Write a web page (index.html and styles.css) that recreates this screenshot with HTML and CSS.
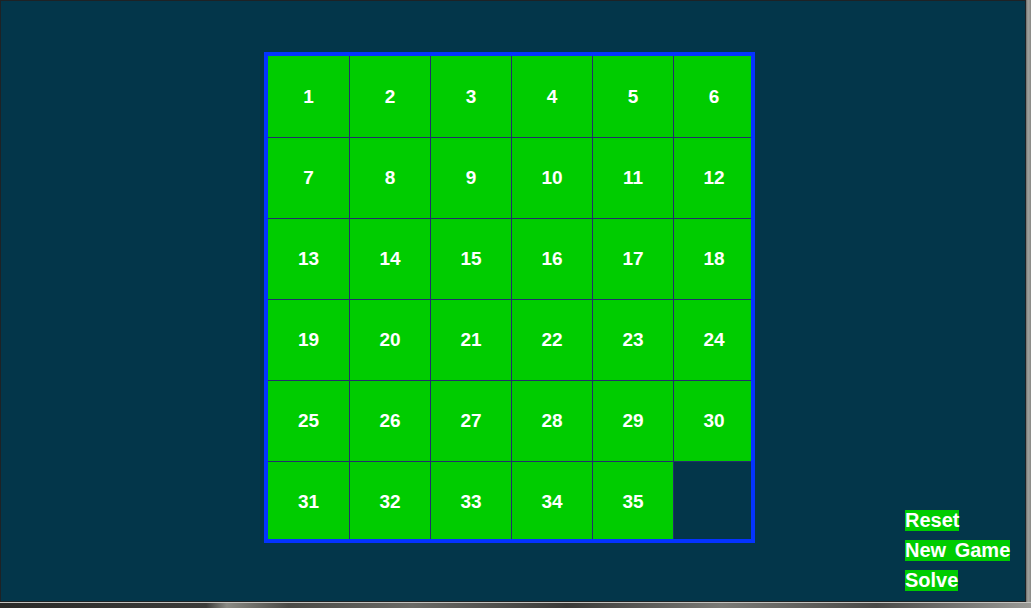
FILE: index.html
```html
<!DOCTYPE html>
<html>
<head>
<meta charset="utf-8">
<link rel="stylesheet" href="styles.css">
</head>
<body>
<div class="screen">
  <div class="top">
    <div class="window">
      <div class="board">
        <div class="tile">1</div><div class="tile">2</div><div class="tile">3</div><div class="tile">4</div><div class="tile">5</div><div class="tile">6</div>
        <div class="tile">7</div><div class="tile">8</div><div class="tile">9</div><div class="tile">10</div><div class="tile">11</div><div class="tile">12</div>
        <div class="tile">13</div><div class="tile">14</div><div class="tile">15</div><div class="tile">16</div><div class="tile">17</div><div class="tile">18</div>
        <div class="tile">19</div><div class="tile">20</div><div class="tile">21</div><div class="tile">22</div><div class="tile">23</div><div class="tile">24</div>
        <div class="tile">25</div><div class="tile">26</div><div class="tile">27</div><div class="tile">28</div><div class="tile">29</div><div class="tile">30</div>
        <div class="tile">31</div><div class="tile">32</div><div class="tile">33</div><div class="tile">34</div><div class="tile">35</div><div class="empty"></div>
      </div>
      <div class="controls">
        <span class="btn">Reset</span>
        <span class="btn">New Game</span>
        <span class="btn">Solve</span>
      </div>
    </div>
    <div class="side"></div>
  </div>
  <div class="bottom"></div>
</div>
</body>
</html>
```

FILE: styles.css
```css
html, body {
  margin: 0;
  padding: 0;
  background: #5a5a56;
}
.screen {
  width: 1031px;
  height: 608px;
  display: flex;
  flex-direction: column;
  overflow: hidden;
}
.top {
  display: flex;
  height: 602px;
}
.window {
  box-sizing: border-box;
  width: 1026px;
  height: 602px;
  border: 1px solid #1e2225;
  background: #03364a;
  display: flex;
  align-items: flex-start;
}
.side {
  flex: 1;
  background: linear-gradient(to right, #6e6e6a, #a2a29e 40%, #8a8a86);
}
.bottom {
  height: 6px;
  border-top: 1px solid #c4c4c0;
  background: linear-gradient(to right, #2a2a28, #3c3c3a 20%, #8a8a84 22%, #4a4a46 28%, #6a6a66 40%, #3a3a38 55%, #7a7a76 70%, #4a4a48 85%, #9a9a96);
}
.board {
  margin-left: 263px;
  margin-top: 51px;
  width: 483px;
  height: 483px;
  border: 4px solid #0433ff;
  overflow: hidden;
  display: grid;
  grid-template-columns: 82px repeat(5, 81px);
  grid-template-rows: 82px repeat(5, 81px);
  flex: none;
}
.tile {
  box-sizing: border-box;
  background: #00cc00;
  border-right: 1px solid #22306c;
  border-bottom: 1px solid #22306c;
  color: #ffffff;
  font-family: "Liberation Sans", Arial, sans-serif;
  font-weight: bold;
  font-size: 19px;
  display: flex;
  align-items: center;
  justify-content: center;
}
.empty {
  background: transparent;
}
.controls {
  align-self: flex-end;
  margin-left: 150px;
  margin-bottom: 10px;
  display: flex;
  flex-direction: column;
  align-items: flex-start;
  gap: 9px;
}
.btn {
  display: block;
  background: #00cc00;
  color: #ffffff;
  font-family: "Liberation Sans", Arial, sans-serif;
  font-weight: bold;
  font-size: 20px;
  line-height: 21px;
  height: 21px;
  word-spacing: 3px;
}
```
